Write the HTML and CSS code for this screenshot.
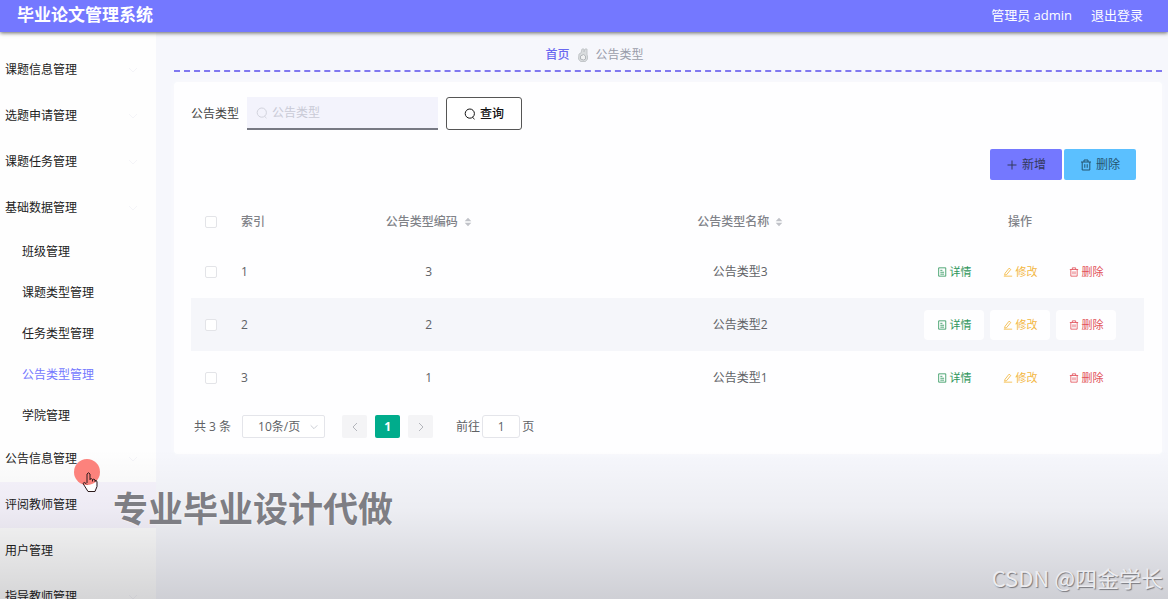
FILE: index.html
```html
<!DOCTYPE html>
<html lang="zh-CN">
<head>
<meta charset="utf-8">
<title>毕业论文管理系统</title>
<link rel="stylesheet" href="styles.css">
</head>
<body>
<svg class="defs" aria-hidden="true">
  <symbol id="search" viewBox="0 0 12 12"><circle cx="5.8" cy="5.6" r="4.6"/><path d="M8.6 9.3l1.9 1.9"/></symbol>
  <symbol id="plus" viewBox="0 0 12 12"><path d="M6 1.5v9M1.5 6h9"/></symbol>
  <symbol id="trash" viewBox="0 0 12 12"><path d="M1 3h10M2.2 3v8h7.6V3M4 3V1h4v2M4.8 5.2v3.6M7.2 5.2v3.6"/></symbol>
  <symbol id="doc" viewBox="0 0 12 12"><path d="M2 1h8.5v10H2zM4 4h2.5M4 6.3h4.5M4 8.6h4.5"/></symbol>
  <symbol id="edit" viewBox="0 0 12 12"><path d="M2.4 7.6L7.3 1.4l2 1.6-4.9 6.1-2.4.7zM1 11h10"/></symbol>
  <symbol id="down" viewBox="0 0 12 12"><path d="M2 4l4 4 4-4"/></symbol>
  <symbol id="left" viewBox="0 0 12 12"><path d="M8 2L4 6l4 4"/></symbol>
  <symbol id="right" viewBox="0 0 12 12"><path d="M4 2l4 4-4 4"/></symbol>
  <symbol id="sort" viewBox="0 0 8 12"><path d="M4 1l4 4H0zM0 7h8l-4 4z"/></symbol>
</svg>
<header class="topbar">
  <h1 class="brand">毕业论文管理系统</h1>
  <div class="account"><span>管理员 admin</span><a class="logout" href="#">退出登录</a></div>
</header>
<div class="shell">
  <nav class="sidebar">
    <a class="item" href="#">课题信息管理<svg class="ico"><use href="#down"/></svg></a>
    <a class="item" href="#">选题申请管理<svg class="ico"><use href="#down"/></svg></a>
    <a class="item" href="#">课题任务管理<svg class="ico"><use href="#down"/></svg></a>
    <a class="item" href="#">基础数据管理<svg class="ico"><use href="#down"/></svg></a>
    <a class="sub" href="#">班级管理</a>
    <a class="sub" href="#">课题类型管理</a>
    <a class="sub" href="#">任务类型管理</a>
    <a class="sub current" href="#">公告类型管理</a>
    <a class="sub" href="#">学院管理</a>
    <a class="item" href="#">公告信息管理<svg class="ico"><use href="#down"/></svg></a>
    <a class="item hovered" href="#">评阅教师管理</a>
    <a class="item" href="#">用户管理</a>
    <a class="item" href="#">指导教师管理<svg class="ico"><use href="#down"/></svg></a>
  </nav>
  <main class="main">
    <div class="crumbs">
      <a class="home" href="#">首页</a>
      <svg class="hand" viewBox="0 0 12 14"><path d="M2 6l2-1 1-4h2v3l1-3h2v6l.5 1v3L8.500 13.500h-5L1.500 11z"/><path class="fold" d="M3.500 8l3-1.500L8.500 8v3l-2 1-3-1z"/></svg>
      <span>公告类型</span>
    </div>
    <section class="card">
      <form class="search">
        <label for="kind">公告类型</label>
        <div class="field"><svg class="ico"><use href="#search"/></svg><input id="kind" type="text" placeholder="公告类型"></div>
        <button class="query" type="button"><svg class="ico"><use href="#search"/></svg>查询</button>
      </form>
      <div class="tools">
        <button class="add" type="button"><svg class="ico"><use href="#plus"/></svg>新增</button>
        <button class="remove" type="button"><svg class="ico"><use href="#trash"/></svg>删除</button>
      </div>
      <table class="grid">
        <colgroup><col class="c-check"><col class="c-index"><col class="c-wide"><col class="c-wide"><col class="c-ops"></colgroup>
        <thead>
          <tr><th><input type="checkbox" aria-label="全选"></th><th class="left">索引</th><th>公告类型编码<svg class="sort"><use href="#sort"/></svg></th><th>公告类型名称<svg class="sort"><use href="#sort"/></svg></th><th>操作</th></tr>
        </thead>
        <tbody>
          <tr><td><input type="checkbox" aria-label="选择1"></td><td class="left">1</td><td>3</td><td>公告类型3</td><td><div class="ops"><button class="view" type="button"><svg class="ico"><use href="#doc"/></svg>详情</button><button class="edit" type="button"><svg class="ico"><use href="#edit"/></svg>修改</button><button class="del" type="button"><svg class="ico"><use href="#trash"/></svg>删除</button></div></td></tr>
          <tr class="striped"><td><input type="checkbox" aria-label="选择2"></td><td class="left">2</td><td>2</td><td>公告类型2</td><td><div class="ops"><button class="view" type="button"><svg class="ico"><use href="#doc"/></svg>详情</button><button class="edit" type="button"><svg class="ico"><use href="#edit"/></svg>修改</button><button class="del" type="button"><svg class="ico"><use href="#trash"/></svg>删除</button></div></td></tr>
          <tr><td><input type="checkbox" aria-label="选择3"></td><td class="left">3</td><td>1</td><td>公告类型1</td><td><div class="ops"><button class="view" type="button"><svg class="ico"><use href="#doc"/></svg>详情</button><button class="edit" type="button"><svg class="ico"><use href="#edit"/></svg>修改</button><button class="del" type="button"><svg class="ico"><use href="#trash"/></svg>删除</button></div></td></tr>
        </tbody>
      </table>
      <div class="pager">
        <span>共 3 条</span>
        <div class="size"><select aria-label="每页条数"><option>10条/页</option></select><svg class="ico"><use href="#down"/></svg></div>
        <div class="pages">
          <button type="button" aria-label="上一页"><svg class="ico"><use href="#left"/></svg></button>
          <button class="on" type="button">1</button>
          <button type="button" aria-label="下一页"><svg class="ico"><use href="#right"/></svg></button>
        </div>
        <div class="jump"><label for="page">前往</label><input id="page" type="text" value="1"><span>页</span></div>
      </div>
    </section>
  </main>
</div>
<div class="shade"></div>
<div class="caption">专业毕业设计代做</div>
<div class="credit">CSDN @四金学长</div>
<svg class="pointer" viewBox="0 0 30 36"><path class="glove" d="M10 25l1-3 3 3h9v3l-2 5h-6z"/><circle class="spot" cx="14" cy="14" r="13"/><path class="finger" d="M14 25v-9q1.500-2.500 3 0v6m0-1q1.500-1 2.500.5v2m0-2q1.500-1 2.500.5v2m0-1.500q2-.5 2 1.500v4.500l-2 5h-7l-5-8q1-2 3 0l1 1"/></svg>
</body>
</html>
```
FILE: styles.css
```css
* { box-sizing: border-box; }
body {
  margin: 0;
  height: 100vh;
  display: flex;
  flex-direction: column;
  overflow: hidden;
  position: relative;
  background: #f6f7fc;
  color: #606266;
  font: 12px/18px "Open Sans", "Noto Sans CJK SC", sans-serif;
}
a { text-decoration: none; color: inherit; }
button, input, select { font: inherit; color: inherit; margin: 0; }
button { display: flex; align-items: center; justify-content: center; padding: 0; border: 0; }
.defs { position: absolute; width: 0; height: 0; }
.ico { width: 12px; height: 12px; flex: none; fill: none; stroke: currentColor; stroke-width: 1; }
.topbar {
  flex: none;
  height: 32px;
  padding: 0 25px 2px 17px;
  display: flex;
  align-items: center;
  justify-content: space-between;
  background: #7478ff;
  color: #fff;
  box-shadow: 0 1px 4px rgba(0, 0, 0, .6);
  z-index: 1;
}
.brand { margin: 0; font-size: 17px; line-height: 24px; font-weight: 700; }
.account { display: flex; gap: 19px; font-size: 13px; }
.shell { flex: 1; min-height: 0; display: flex; }
.sidebar { width: 156px; flex: none; padding-top: 15px; background: #fefefe; color: #222; overflow: hidden; }
.item { height: 46px; padding: 0 17px 0 5px; display: flex; align-items: center; justify-content: space-between; }
.item .ico { color: #f4f4f8; }
.hovered { background: #f7f4fd; }
.sub { height: 41px; padding-left: 22px; display: flex; align-items: center; }
.current { color: #7478ff; }
.main { flex: 1; min-width: 0; padding: 0 6px 0 18px; }
.crumbs {
  height: 40px;
  padding: 8px 147px 0 0;
  display: flex;
  align-items: center;
  justify-content: center;
  gap: 7px;
  border-bottom: 2px dashed #8078f0;
  color: #9a9daa;
}
.home { color: #6a68f0; font-weight: 500; }
.hand { width: 12px; height: 14px; fill: #d9dcde; stroke: #c3c7ca; stroke-width: 1; }
.fold { fill: #f0f1f2; stroke: #b2b6ba; }
.card { margin-top: 10px; padding: 15px 18px 16px 17px; background: #fefeff; border-radius: 4px; box-shadow: 0 0 4px #fafbfd; }
.search { display: flex; align-items: center; gap: 8px; color: #444; }
.field {
  width: 191px;
  height: 33px;
  padding-left: 9px;
  display: flex;
  align-items: center;
  gap: 4px;
  background: #f3f3fc;
  border-bottom: 2px solid #777983;
  color: #d2d3dd;
}
.field input { flex: 1; min-width: 0; padding: 0; border: 0; background: none; outline: 0; }
.field input::placeholder { color: #c9cad6; }
.query { width: 76px; height: 33px; gap: 4px; background: #fff; border: 1px solid #555; border-radius: 3px; color: #111; font-weight: 500; }
.tools { margin: 19px 8px 18px 0; display: flex; justify-content: flex-end; gap: 2px; }
.tools button { width: 72px; height: 31px; gap: 4px; border-radius: 2px; color: #33395c; }
.tools .add { background: #7478ff; }
.tools .remove { background: #5bc0ff; color: #24546f; }
.grid { width: 100%; table-layout: fixed; border-collapse: collapse; }
.c-check { width: 40px; }
.c-index { width: 42px; }
.c-ops { width: 248px; }
.grid th, .grid td { padding: 0; text-align: center; font-weight: 400; }
.grid th { height: 47px; color: #808288; font-weight: 500; }
.grid td { height: 53px; }
.grid .left { padding-left: 10px; text-align: left; white-space: nowrap; }
.grid input {
  appearance: none;
  width: 12px;
  height: 12px;
  display: block;
  margin: 0 auto;
  border: 1px solid #e3e4e8;
  border-radius: 2px;
  background: #fff;
}
.striped { background: #f5f6fa; }
.sort { width: 8px; height: 10px; margin-left: 6px; fill: #c0c2c8; vertical-align: -1px; }
.ops { display: flex; justify-content: center; gap: 6px; }
.ops button { width: 60px; height: 30px; gap: 3px; background: #fefeff; border-radius: 4px; font-size: 11px; }
.ops .ico { width: 10px; height: 10px; }
.view { color: #2f965b; }
.edit { color: #f3b73f; }
.del { color: #e2505a; }
.pager { margin: 11px 0 0 3px; display: flex; align-items: center; }
.size { position: relative; width: 83px; margin-left: 11px; }
.size select { appearance: none; width: 100%; height: 23px; padding: 0 0 0 15px; border: 1px solid #e4e5ea; border-radius: 2px; background: #fff; }
.size .ico { position: absolute; right: 6px; top: 7px; width: 10px; height: 10px; color: #c0c4cc; pointer-events: none; }
.pages { margin: 0 23px 0 17px; display: flex; gap: 8px; }
.pages button { width: 25px; height: 23px; border-radius: 2px; background: #f4f4f6; color: #b4b6bc; }
.pages .on { background: #00ac8c; color: #fff; font-weight: 700; }
.jump { display: flex; align-items: center; gap: 2px; }
.jump input { width: 38px; height: 23px; padding: 0; text-align: center; border: 1px solid #e4e5ea; border-radius: 3px; background: #fff; }
.shade {
  position: absolute;
  inset: auto 0 0 0;
  height: 150px;
  background: linear-gradient(rgba(0, 0, 10, 0), rgba(0, 0, 10, .04) 40%, rgba(0, 0, 10, .16));
  pointer-events: none;
  z-index: 2;
}
.caption {
  position: absolute;
  left: 113px;
  bottom: 66px;
  z-index: 3;
  font-size: 35px;
  line-height: 48px;
  font-weight: 700;
  color: #7e7e84;
  text-shadow: 0 0 2px #fff;
}
.credit {
  position: absolute;
  right: 5px;
  bottom: 6px;
  z-index: 3;
  font-family: "Noto Sans CJK SC", sans-serif;
  font-size: 22px;
  line-height: 32px;
  color: #ececf0;
  text-shadow: 1px 1px 1px #77777c;
}
.pointer { position: absolute; left: 73px; top: 458px; width: 30px; height: 36px; z-index: 3; }
.spot { fill: #fc827c; }
.glove { fill: #fff; }
.finger { fill: none; stroke: #2b1a1c; stroke-width: 1; }
```
